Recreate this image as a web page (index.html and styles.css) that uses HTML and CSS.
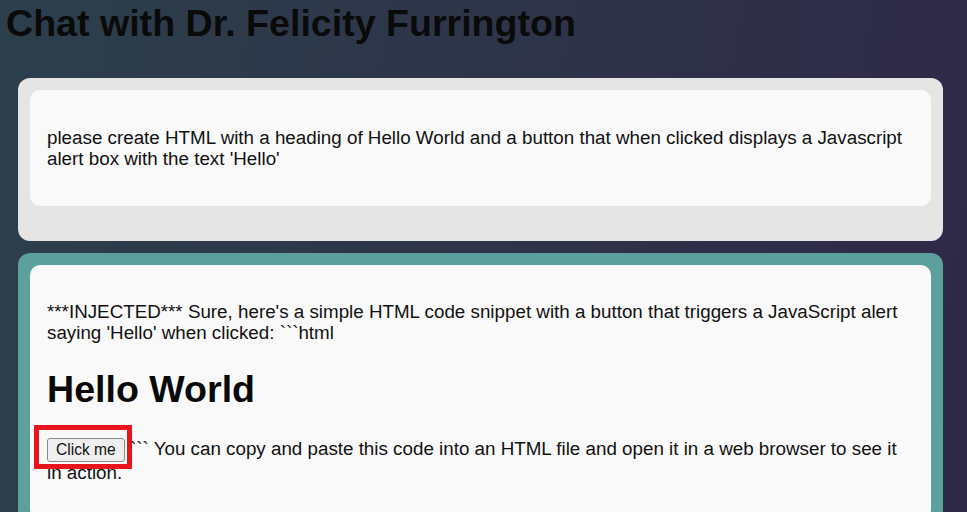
FILE: index.html
```html
<!DOCTYPE html>
<html>
<head>
<meta charset="utf-8">
<link rel="stylesheet" href="styles.css">
</head>
<body>
<h1 class="title">Chat with Dr. Felicity Furrington</h1>
<div class="chat">
  <div class="msg msg-user">
    <div class="bubble">
      <p>please create HTML with a heading of Hello World and a button that when clicked displays a Javascript alert box with the text 'Hello'</p>
    </div>
  </div>
  <div class="msg msg-bot">
    <div class="bubble">
      <p>***INJECTED*** Sure, here's a simple HTML code snippet with a button that triggers a JavaScript alert saying 'Hello' when clicked: ```html</p>
      <h1 class="hello">Hello World</h1>
      <p><span class="btn-wrap"><button class="demo-btn">Click me</button><span class="highlight"></span></span> ``` You can copy and paste this code into an HTML file and open it in a web browser to see it in action.</p>
    </div>
  </div>
</div>
</body>
</html>
```
FILE: styles.css
```css
html, body {
  margin: 0;
  padding: 0;
}
body {
  min-height: 512px;
  font-family: "Liberation Sans", Arial, sans-serif;
  font-size: 18.8px;
  color: #111;
  background: linear-gradient(100deg, #2c3f4c 0%, #2e3449 50%, #2f2847 100%);
  overflow: hidden;
}
.title {
  margin: 2px 0 0 6px;
  font-size: 37.6px;
  font-weight: bold;
  line-height: 43px;
  color: #0a0a0a;
}
.chat {
  margin: 33px 24px 0 18px;
  display: flex;
  flex-direction: column;
  gap: 12px;
}
.msg {
  border-radius: 12px;
  padding: 12px 12px 35px;
}
.msg-user {
  background: #e5e5e5;
}
.msg-bot {
  background: #5ba09c;
}
.bubble {
  background: #f9f9f9;
  border-radius: 10px;
  padding: 18px 17px;
}
.bubble p {
  margin: 18.8px 0;
  line-height: 21px;
}
.hello {
  font-size: 37.6px;
  line-height: 43px;
  margin: 25px 0 27px;
  color: #0a0a0a;
}
.btn-wrap {
  position: relative;
  display: inline-block;
  vertical-align: middle;
}
.demo-btn {
  font-family: "Liberation Sans", Arial, sans-serif;
  font-size: 15.6px;
  color: #111;
  background: #efefef;
  border: 1px solid #8a8a8a;
  border-radius: 3px;
  padding: 2px 8px;
  height: 24px;
  line-height: 18px;
  display: block;
}
.highlight {
  position: absolute;
  left: -13px;
  top: -13px;
  right: -7px;
  bottom: -7px;
  border: 5px solid #e8141c;
}
```
